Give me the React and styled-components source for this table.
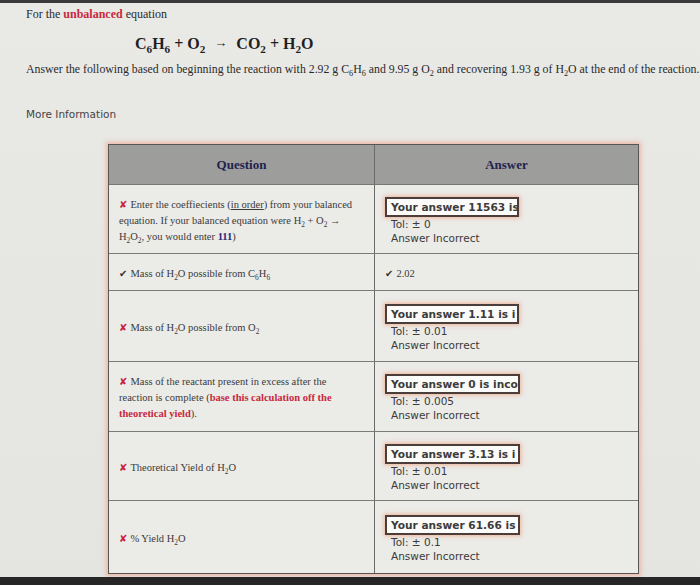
import React from 'react';
import styled, { createGlobalStyle } from 'styled-components';

const GlobalStyle = createGlobalStyle`
  html, body {
    margin: 0;
    padding: 0;
    background: #e7e7e4;
  }
`;

const Page = styled.div`
  width: 700px;
  height: 585px;
  overflow: hidden;
  display: flex;
  flex-direction: column;
  background: linear-gradient(180deg, #e9e9e6 0%, #e6e6e3 60%, #e4e4e1 100%);
  font-family: 'Liberation Serif', 'Times New Roman', serif;
  color: #2a2a2a;
`;

const TopBar = styled.div`
  height: 3px;
  background: #3a3a3a;
  flex-shrink: 0;
`;

const BottomBar = styled.div`
  margin-top: auto;
  height: 8px;
  background: #262626;
  flex-shrink: 0;
`;

const Intro = styled.div`
  padding: 4px 0 0 26px;
  font-size: 12px;
  line-height: 14px;
  white-space: nowrap;
`;

const Red = styled.span`
  color: #c8283c;
  font-weight: bold;
`;

const Navy = styled.span`
  color: #26287a;
  font-weight: bold;
`;

const Equation = styled.div`
  margin: 13px 0 0 109px;
  font-size: 16px;
  font-weight: bold;
  line-height: 20px;
  color: #1f1f1f;
`;

const Arrow = styled.span`
  font-weight: normal;
  font-size: 13px;
  margin: 0 9px;
  position: relative;
  top: -2px;
`;

const Sub = styled.sub`
  font-size: 0.7em;
  line-height: 0;
`;

const Statement = styled.div`
  margin-top: 7px;
  font-size: 11.8px;
  line-height: 14px;
  white-space: nowrap;
`;

const MoreInfo = styled.div`
  margin-top: 31px;
  font-family: 'DejaVu Sans', Verdana, sans-serif;
  font-size: 10.5px;
  color: #444;
`;

const Table = styled.div`
  margin: 23px 0 0 108px;
  width: 529px;
  display: grid;
  grid-template-columns: 266px 263px;
  border: 1px solid #5a5552;
  box-shadow: 0 0 4px 2px rgba(240, 150, 120, 0.55);
  background: #ebebe8;
`;

const HeadCell = styled.div`
  height: 39px;
  background: #9d9d9b;
  display: flex;
  align-items: center;
  justify-content: center;
  font-size: 13px;
  font-weight: bold;
  color: #22234f;
  border-right: ${(p) => (p.$last ? 'none' : '1px solid #6a6a6a')};
  border-bottom: 1px solid #777;
`;

const Cell = styled.div`
  height: ${(p) => p.$h}px;
  display: flex;
  flex-direction: column;
  justify-content: center;
  box-sizing: border-box;
  padding: ${(p) => (p.$right ? '3px 10px 0 10px' : '3px 18px 0 10px')};
  border-right: ${(p) => (p.$right ? 'none' : '1px solid #6a6a6a')};
  border-bottom: ${(p) => (p.$end ? 'none' : '1px solid #7a7a7a')};
  font-size: 10.5px;
  line-height: 16px;
  color: #3a3a3a;
`;

const Mark = styled.span`
  font-family: 'DejaVu Sans', sans-serif;
  font-size: 10px;
  color: ${(p) => (p.$ok ? '#333' : '#c8203a')};
  margin-right: 3px;
`;

const AnswerBox = styled.div`
  width: ${(p) => p.$w}px;
  height: 20px;
  box-sizing: border-box;
  border: 2px solid #4b3d3a;
  box-shadow: 0 0 4px 1px rgba(240, 140, 100, 0.6);
  background: #fbfbf9;
  overflow: hidden;
  white-space: nowrap;
  padding: 0 4px;
  font-family: 'DejaVu Sans', Verdana, sans-serif;
  font-size: 10.6px;
  font-weight: bold;
  line-height: 16px;
  color: #3c3c3c;
`;

const Note = styled.div`
  font-family: 'DejaVu Sans', Verdana, sans-serif;
  font-size: 10.5px;
  line-height: 14px;
  color: #3a3a3a;
  margin-left: 6px;
  &:first-of-type {
    margin-top: 2px;
  }
`;

const Verdict = ({ value, tol, w }) => (
  <>
    <AnswerBox $w={w}>Your answer {value}</AnswerBox>
    <Note>Tol: ± {tol}</Note>
    <Note>Answer Incorrect</Note>
  </>
);

const rows = [
  {
    h: 69,
    q: (
      <div>
        <Mark>✘</Mark>Enter the coeffiecients (<u>in order</u>) from your balanced equation. If your balanced
        equation were H<Sub>2</Sub> + O<Sub>2</Sub> → H<Sub>2</Sub>O<Sub>2</Sub>, you would enter{' '}
        <Navy>111</Navy>)
      </div>
    ),
    a: <Verdict value="11563 is" tol="0" w={134} />,
  },
  {
    h: 37,
    q: (
      <div>
        <Mark $ok>✔</Mark>Mass of H<Sub>2</Sub>O possible from C<Sub>6</Sub>H<Sub>6</Sub>
      </div>
    ),
    a: (
      <div>
        <Mark $ok>✔</Mark>2.02
      </div>
    ),
  },
  {
    h: 71,
    q: (
      <div>
        <Mark>✘</Mark>Mass of H<Sub>2</Sub>O possible from O<Sub>2</Sub>
      </div>
    ),
    a: <Verdict value="1.11 is i" tol="0.01" w={134} />,
  },
  {
    h: 70,
    q: (
      <div>
        <Mark>✘</Mark>Mass of the reactant present in excess after the reaction is complete (
        <Red>base this calculation off the theoretical yield</Red>).
      </div>
    ),
    a: <Verdict value="0 is inco" tol="0.005" w={135} />,
  },
  {
    h: 69,
    q: (
      <div>
        <Mark>✘</Mark>Theoretical Yield of H<Sub>2</Sub>O
      </div>
    ),
    a: <Verdict value="3.13 is i" tol="0.01" w={135} />,
  },
  {
    h: 72,
    q: (
      <div>
        <Mark>✘</Mark>% Yield H<Sub>2</Sub>O
      </div>
    ),
    a: <Verdict value="61.66 is" tol="0.1" w={135} />,
  },
];

export default function App() {
  return (
    <>
      <GlobalStyle />
      <Page>
        <TopBar />
        <Intro>
          For the <Red>unbalanced</Red> equation
          <Equation>
            C<Sub>6</Sub>H<Sub>6</Sub> + O<Sub>2</Sub>
            <Arrow>→</Arrow>
            CO<Sub>2</Sub> + H<Sub>2</Sub>O
          </Equation>
          <Statement>
            Answer the following based on beginning the reaction with 2.92 g C<Sub>6</Sub>H<Sub>6</Sub> and 9.95 g
            O<Sub>2</Sub> and recovering 1.93 g of H<Sub>2</Sub>O at the end of the reaction.
          </Statement>
          <MoreInfo>More Information</MoreInfo>
        </Intro>
        <Table>
          <HeadCell>Question</HeadCell>
          <HeadCell $last>Answer</HeadCell>
          {rows.map((r, i) => (
            <React.Fragment key={i}>
              <Cell $h={r.h} $end={i === rows.length - 1}>
                {r.q}
              </Cell>
              <Cell $h={r.h} $right $end={i === rows.length - 1}>
                {r.a}
              </Cell>
            </React.Fragment>
          ))}
        </Table>
        <BottomBar />
      </Page>
    </>
  );
}
